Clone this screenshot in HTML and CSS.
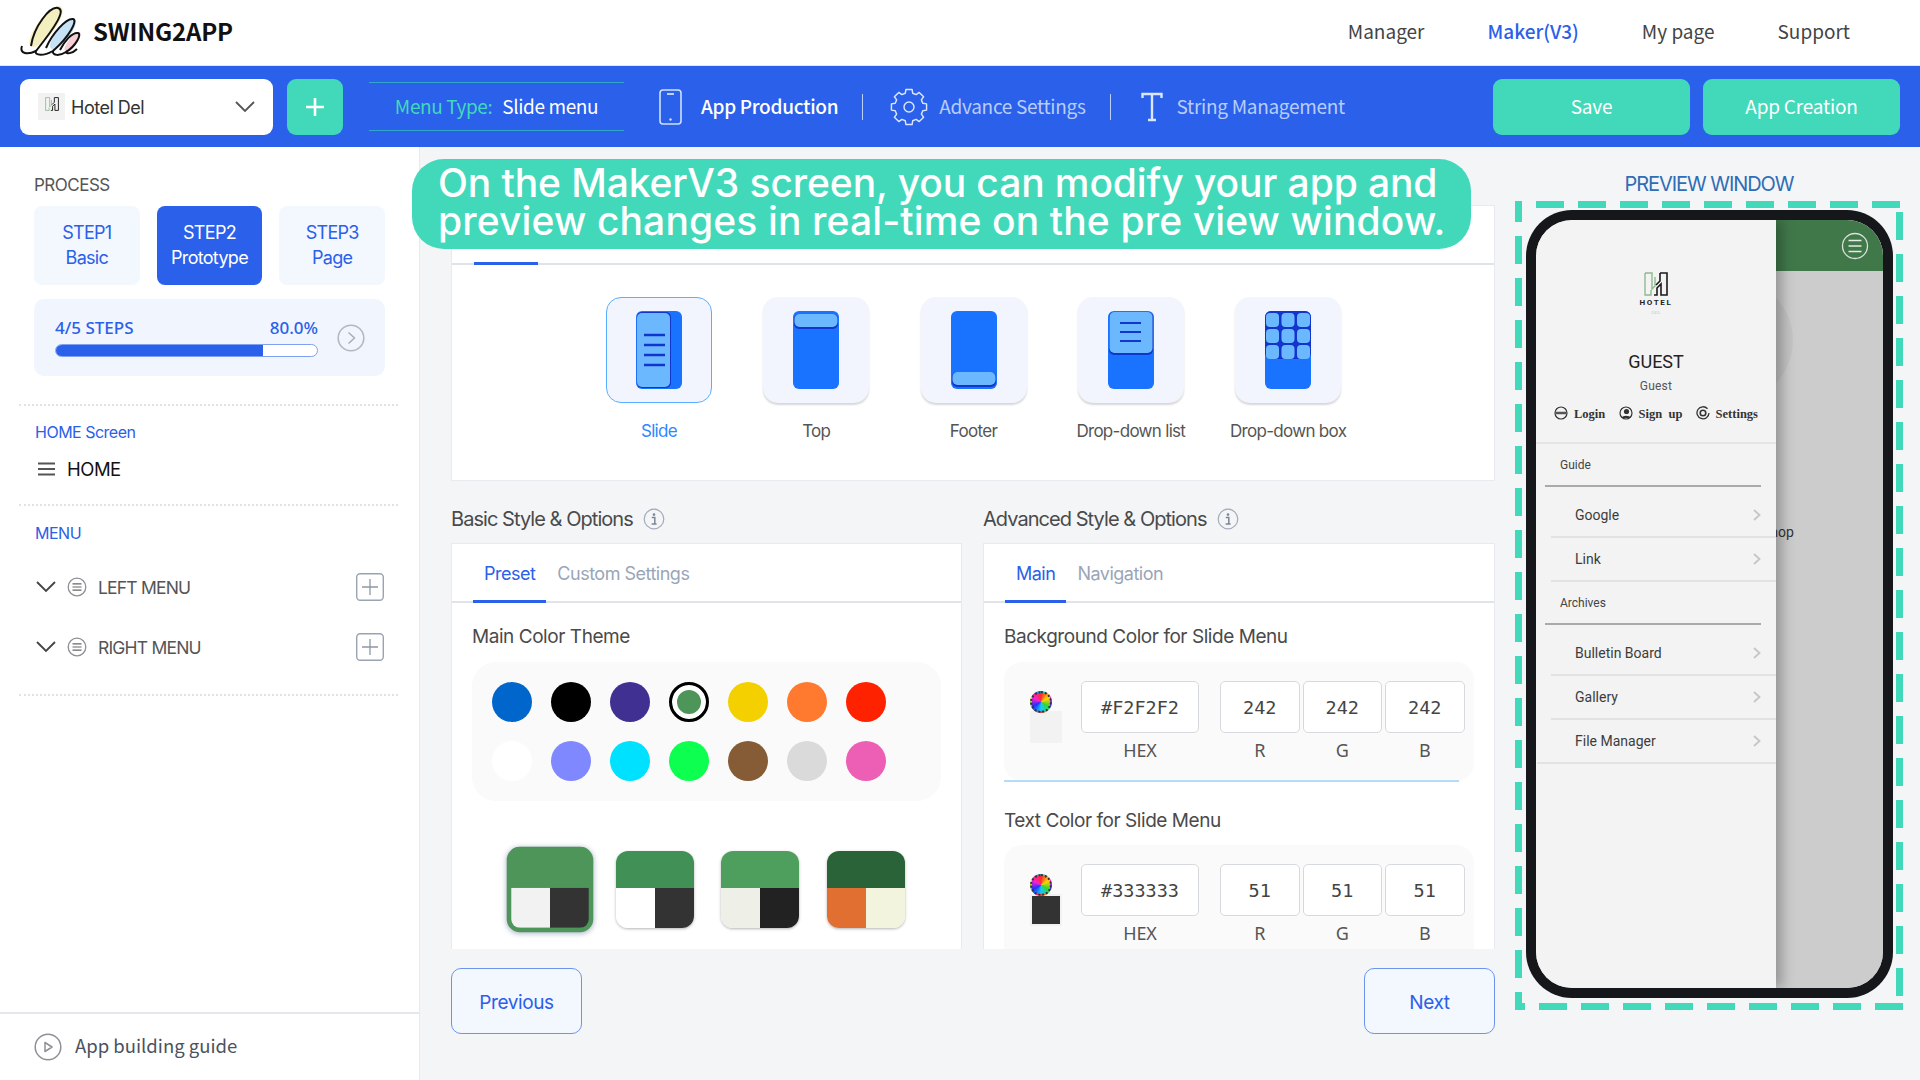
FILE: index.html
```html
<!DOCTYPE html>
<html lang="en">
<head>
<meta charset="utf-8">
<title>Swing2App Maker</title>
<link rel="stylesheet" href="styles.css">
</head>
<body>
<svg class="defs" width="0" height="0" aria-hidden="true">
  <symbol id="hotel" viewBox="0 0 24 24">
    <path d="M1 1h7v16l3-3V5" fill="none" stroke="#8fb98f" stroke-width="1.4"/>
    <path d="M1 1v22h6v-5" fill="none" stroke="#8fb98f" stroke-width="1.4"/>
    <path d="M16 1h7v22h-6V12l-4 4v7h-3" fill="none" stroke="#1a1a1a" stroke-width="1.6"/>
    <path d="M16 1v8l-4 4" fill="none" stroke="#1a1a1a" stroke-width="1.6"/>
  </symbol>
  <symbol id="chev" viewBox="0 0 20 12">
    <path d="M1 1l9 9 9-9" fill="none" stroke="currentColor" stroke-width="1.8"/>
  </symbol>
  <symbol id="list" viewBox="0 0 20 20">
    <circle cx="10" cy="10" r="8.8" fill="none" stroke="#8b8f96" stroke-width="1.3"/>
    <path d="M5.5 6.8h9M5.5 10h9M5.5 13.2h9" stroke="#666" stroke-width="1.2"/>
  </symbol>
  <symbol id="plusbox" viewBox="0 0 28 28">
    <rect x=".7" y=".7" width="26.6" height="26.6" rx="3.500" fill="none" stroke="#9aa3b2" stroke-width="1.4"/>
    <path d="M14 6v16M6 14h16" stroke="#8f98a8" stroke-width="1.3"/>
  </symbol>
  <symbol id="info" viewBox="0 0 22 22">
    <circle cx="11" cy="11" r="9.8" fill="none" stroke="#a3abb9" stroke-width="1.2"/>
    <circle cx="11" cy="6.6" r="1.3" fill="#7c8698"/>
    <path d="M8.8 9.6h3v6.2M8.6 16h5" fill="none" stroke="#7c8698" stroke-width="1.5"/>
  </symbol>
  <symbol id="gt" viewBox="0 0 8 12">
    <path d="M1 1l5.5 5L1 11" fill="none" stroke="#c6c6c6" stroke-width="1.8"/>
  </symbol>
</svg>

<header class="topbar">
  <div class="brand">
    <svg class="brand-mark" width="64" height="56" viewBox="0 0 64 56">
      <ellipse cx="26" cy="22.500" rx="8.500" ry="25" transform="rotate(37.500 26 22.500)" fill="#f3efbf"/>
      <ellipse cx="43" cy="30" rx="6.500" ry="19" transform="rotate(38.700 43 30)" fill="#c5e2f6"/>
      <ellipse cx="52.500" cy="37.500" rx="3.800" ry="12" transform="rotate(38 52.500 37.500)" fill="#f7cdd6"/>
      <path d="M11 42C14 22 30 2 38 4C46 6 36 22 16 47" fill="none" stroke="#111" stroke-width="2"/>
      <path d="M26 44C32 30 46 14 53 15C58 16 50 32 33 47" fill="none" stroke="#111" stroke-width="2"/>
      <path d="M40 46C44 38 52 28 58 29C62 30 56 42 46 48" fill="none" stroke="#111" stroke-width="2"/>
      <path d="M2 42C-1 50 8 51 16 47C14 52 24 52 33 47C32 52 40 52 46 48C46 50 52 50 57 45" fill="none" stroke="#111" stroke-width="2"/>
    </svg>
    <span class="brand-name">SWING2APP</span>
  </div>
  <nav class="topnav">
    <a class="topnav-link">Manager</a>
    <a class="topnav-link is-active">Maker(V3)</a>
    <a class="topnav-link">My page</a>
    <a class="topnav-link">Support</a>
  </nav>
</header>

<section class="toolbar">
  <div class="app-select">
    <span class="app-thumb"><svg width="14" height="14"><use href="#hotel"/></svg></span>
    <span class="app-name">Hotel Del</span>
    <svg class="app-caret" width="20" height="12"><use href="#chev"/></svg>
  </div>
  <button class="add-btn">
    <svg width="20" height="20" viewBox="0 0 20 20"><path d="M10 1v18M1 10h18" stroke="#fff" stroke-width="2.6"/></svg>
  </button>
  <div class="menu-type"><span class="menu-type-key">Menu Type:</span><span class="menu-type-val">Slide menu</span></div>
  <div class="tool-tab is-on tool-first">
    <svg width="23" height="36" viewBox="0 0 23 36"><rect x="1" y="1" width="21" height="34" rx="3" fill="none" stroke="#cfe0ff" stroke-width="1.6"/><path d="M8 5h7" stroke="#cfe0ff" stroke-width="1.8"/><circle cx="11.5" cy="30.5" r="1.2" fill="#cfe0ff"/></svg>
    <span>App Production</span>
  </div>
  <i class="tool-sep"></i>
  <div class="tool-tab tool-gear">
    <svg width="38" height="38" viewBox="0 0 32 32"><path d="M19.1 4.4L18.6 1.2H13.4L12.9 4.4L10 5.6L7.4 3.7L3.7 7.4L5.6 10L4.4 12.9L1.2 13.4V18.6L4.4 19.1L5.6 22L3.7 24.6L7.4 28.3L10 26.4L12.9 27.6L13.4 30.8H18.6L19.1 27.6L22 26.4L24.6 28.3L28.3 24.6L26.4 22L27.6 19.1L30.8 18.6V13.4L27.6 12.9L26.4 10L28.3 7.4L24.6 3.7L22 5.6Z" fill="none" stroke="#dbe6ff" stroke-width="1.2" stroke-linejoin="round"/><circle cx="16" cy="16" r="4.2" fill="none" stroke="#dbe6ff" stroke-width="1.2"/></svg>
    <span>Advance Settings</span>
  </div>
  <i class="tool-sep"></i>
  <div class="tool-tab tool-t">
    <svg width="22" height="30" viewBox="0 0 22 30"><path d="M1.5 6V2h19v4M11 2v26M7 28h8" fill="none" stroke="#dbe6ff" stroke-width="2.4"/></svg>
    <span>String Management</span>
  </div>
  <button class="cta cta-save">Save</button>
  <button class="cta">App Creation</button>
</section>

<div class="workspace">
  <aside class="sidebar">
    <div class="side-title">PROCESS</div>
    <div class="steps">
      <div class="step">STEP1<br>Basic</div>
      <div class="step is-on">STEP2<br>Prototype</div>
      <div class="step">STEP3<br>Page</div>
    </div>
    <div class="progress">
      <div class="progress-main">
        <div class="progress-text"><span>4/5 STEPS</span><span>80.0%</span></div>
        <div class="progress-bar"><div class="progress-fill" style="width:79.5%"></div></div>
      </div>
      <svg width="28" height="28" viewBox="0 0 28 28"><circle cx="14" cy="14" r="12.8" fill="none" stroke="#b4b8bf" stroke-width="1.6"/><path d="M11.5 8.5l6 5.5-6 5.5" fill="none" stroke="#a8acb3" stroke-width="1.4"/></svg>
    </div>
    <div class="dots"></div>
    <div class="side-label">HOME Screen</div>
    <div class="home-row">
      <svg width="17" height="14" viewBox="0 0 17 14"><path d="M0 1.5h17M0 7h17M0 12.5h17" stroke="#555" stroke-width="1.8"/></svg>
      <span>HOME</span>
    </div>
    <div class="dots dots-home"></div>
    <div class="side-label side-label-menu">MENU</div>
    <div class="menu-row menu-left">
      <svg class="menu-chev" width="20" height="12"><use href="#chev"/></svg>
      <svg width="20" height="20"><use href="#list"/></svg>
      <span class="menu-name">LEFT MENU</span>
      <svg width="28" height="28"><use href="#plusbox"/></svg>
    </div>
    <div class="menu-row menu-right">
      <svg class="menu-chev" width="20" height="12"><use href="#chev"/></svg>
      <svg width="20" height="20"><use href="#list"/></svg>
      <span class="menu-name">RIGHT MENU</span>
      <svg width="28" height="28"><use href="#plusbox"/></svg>
    </div>
    <div class="dots dots-menu"></div>
    <div class="side-foot">
      <svg width="28" height="28" viewBox="0 0 28 28"><circle cx="14" cy="14" r="12.8" fill="none" stroke="#8c9097" stroke-width="1.5"/><path d="M11 9.5l7 4.5-7 4.5z" fill="none" stroke="#8c9097" stroke-width="1.5" stroke-linejoin="round"/></svg>
      <span>App building guide</span>
    </div>
  </aside>

  <main class="main">
    <div class="bubble"><span class="bubble-a">On the MakerV3 screen, you can modify your app and</span><span class="bubble-b">preview changes in real-time on the pre view window.</span></div>

    <section class="type-card">
      <div class="type-tabs"><i class="type-tab-mark"></i></div>
      <div class="type-list">
        <div class="type-item is-on">
          <div class="type-box">
            <svg width="46" height="78" viewBox="0 0 46 78"><rect width="46" height="78" rx="6" fill="#1a73ff"/><rect x="1" y="1" width="34" height="76" rx="5" fill="#1236cc"/><rect x="1" y="2" width="33" height="74" rx="5" fill="#6cb8ff"/><path d="M8 24h21M8 34h21M8 44h21M8 54h21" stroke="#1236cc" stroke-width="2.4"/></svg>
          </div>
          <span>Slide</span>
        </div>
        <div class="type-item">
          <div class="type-box">
            <svg width="46" height="78" viewBox="0 0 46 78"><rect width="46" height="78" rx="6" fill="#1a73ff"/><rect x="1" y="3" width="44" height="15" rx="5" fill="#1236cc"/><rect x="1.5" y="3" width="43" height="13" rx="5" fill="#6cb8ff"/></svg>
          </div>
          <span>Top</span>
        </div>
        <div class="type-item">
          <div class="type-box">
            <svg width="46" height="78" viewBox="0 0 46 78"><rect width="46" height="78" rx="6" fill="#1a73ff"/><rect x="1" y="61" width="44" height="15" rx="5" fill="#1236cc"/><rect x="1.5" y="61" width="43" height="13" rx="5" fill="#6cb8ff"/></svg>
          </div>
          <span>Footer</span>
        </div>
        <div class="type-item">
          <div class="type-box">
            <svg width="46" height="78" viewBox="0 0 46 78"><rect width="46" height="78" rx="6" fill="#1a73ff"/><rect x="1" y="1" width="44" height="43" rx="5" fill="#1236cc"/><rect x="1.5" y="1" width="43" height="41" rx="5" fill="#6cb8ff"/><path d="M12 12h21M12 21h21M12 30h21" stroke="#1236cc" stroke-width="2.2"/></svg>
          </div>
          <span>Drop-down list</span>
        </div>
        <div class="type-item">
          <div class="type-box">
            <svg class="type-grid-svg" width="46" height="78" viewBox="0 0 46 78"><rect width="46" height="78" rx="6" fill="#1a73ff"/><rect x="0" y="0" width="46" height="48" rx="6" fill="#1236cc"/><g fill="#6cb8ff"><rect x="1" y="2" width="13" height="14" rx="4"/><rect x="16.500" y="2" width="13" height="14" rx="4"/><rect x="32" y="2" width="13" height="14" rx="4"/><rect x="1" y="18" width="13" height="14" rx="4"/><rect x="16.500" y="18" width="13" height="14" rx="4"/><rect x="32" y="18" width="13" height="14" rx="4"/><rect x="1" y="34" width="13" height="14" rx="4"/><rect x="16.500" y="34" width="13" height="14" rx="4"/><rect x="32" y="34" width="13" height="14" rx="4"/></g></svg>
          </div>
          <span>Drop-down box</span>
        </div>
      </div>
    </section>

    <div class="options">
      <section class="option-col">
        <h2 class="option-head">Basic Style &amp; Options <svg width="22" height="22"><use href="#info"/></svg></h2>
        <div class="panel">
          <div class="tabs"><span class="tab is-on">Preset</span><span class="tab">Custom Settings</span></div>
          <div class="panel-body">
            <div class="field-title">Main Color Theme</div>
            <div class="swatches">
              <i class="dot c1"></i><i class="dot c2"></i><i class="dot c3"></i><i class="dot dot-sel"></i><i class="dot c5"></i><i class="dot c6"></i><i class="dot c7"></i>
              <i class="dot c8"></i><i class="dot c9"></i><i class="dot c10"></i><i class="dot c11"></i><i class="dot c12"></i><i class="dot c13"></i><i class="dot c14"></i>
            </div>
            <div class="themes">
              <div class="theme theme-sel"><b class="t-top"></b><div class="t-bot"><i class="t-f2"></i><i class="t-33"></i></div></div>
              <div class="theme theme-2"><b class="t-top"></b><div class="t-bot"><i class="t-ff"></i><i class="t-33"></i></div></div>
              <div class="theme theme-3"><b class="t-top"></b><div class="t-bot"><i class="t-ee"></i><i class="t-22"></i></div></div>
              <div class="theme theme-4"><b class="t-top"></b><div class="t-bot"><i class="t-or"></i><i class="t-cr"></i></div></div>
            </div>
          </div>
        </div>
      </section>

      <section class="option-col">
        <h2 class="option-head">Advanced Style &amp; Options <svg width="22" height="22"><use href="#info"/></svg></h2>
        <div class="panel">
          <div class="tabs"><span class="tab is-on">Main</span><span class="tab">Navigation</span></div>
          <div class="panel-body">
            <div class="field-title">Background Color for Slide Menu</div>
            <div class="color-row">
              <div class="picker"><i class="wheel"></i><i class="chip chip-light"></i></div>
              <div class="cfield"><div class="cinput">#F2F2F2</div><label>HEX</label></div>
              <div class="cfield cfield-r"><div class="cinput">242</div><label>R</label></div>
              <div class="cfield"><div class="cinput">242</div><label>G</label></div>
              <div class="cfield"><div class="cinput">242</div><label>B</label></div>
            </div>
            <div class="color-rule"></div>
            <div class="field-title field-title-2">Text Color for Slide Menu</div>
            <div class="color-row">
              <div class="picker"><i class="wheel"></i><i class="chip chip-dark"></i></div>
              <div class="cfield"><div class="cinput">#333333</div><label>HEX</label></div>
              <div class="cfield cfield-r"><div class="cinput">51</div><label>R</label></div>
              <div class="cfield"><div class="cinput">51</div><label>G</label></div>
              <div class="cfield"><div class="cinput">51</div><label>B</label></div>
            </div>
          </div>
        </div>
      </section>
    </div>

    <div class="pager"><button class="pager-btn">Previous</button><button class="pager-btn">Next</button></div>
  </main>

  <aside class="preview">
    <svg class="dash" width="388" height="809" viewBox="1515 201 388 809">
      <g stroke="#42d9bb" stroke-width="7" fill="none" stroke-dasharray="28 14">
        <path d="M1518.500 201V1010" stroke-dashoffset="7"/>
        <path d="M1536 204.500H1903"/>
        <path d="M1899.500 212V996"/>
        <path d="M1539 1006.500H1903"/>
      </g>
      <path d="M1515 1006.500H1525" stroke="#42d9bb" stroke-width="7"/>
    </svg>
    <div class="preview-title">PREVIEW WINDOW</div>
    <div class="phone">
      <div class="screen">
        <div class="drawer">
          <svg class="drawer-logo" width="24" height="24"><use href="#hotel"/></svg>
          <div class="logo-name">HOTEL</div>
          <div class="logo-sub">DEL</div>
          <div class="guest-big">GUEST</div>
          <div class="guest-small">Guest</div>
          <div class="acct">
            <span class="acct-item"><svg width="14" height="14" viewBox="0 0 14 14"><circle cx="7" cy="7" r="6" fill="none" stroke="#333" stroke-width="1.2"/><path d="M1.500 7h11" stroke="#555" stroke-width="2.4"/></svg>Login</span>
            <span class="acct-item"><svg width="14" height="14" viewBox="0 0 14 14"><circle cx="7" cy="7" r="6" fill="none" stroke="#333" stroke-width="1.2"/><circle cx="7.500" cy="5.500" r="2.600" fill="#333"/><path d="M2.500 12c1-3 8-3 9.500 0z" fill="#333"/></svg>Sign&nbsp; up</span>
            <span class="acct-item"><svg width="14" height="14" viewBox="0 0 14 14"><path d="M11.500 2.800A6 6 0 1 0 13 7" fill="none" stroke="#333" stroke-width="1.300"/><circle cx="7" cy="7" r="2.800" fill="none" stroke="#333" stroke-width="1.600"/></svg>Settings</span>
          </div>
          <div class="d-group">Guide</div>
          <div class="d-item d-first">Google<svg width="8" height="12"><use href="#gt"/></svg></div>
          <div class="d-item">Link<svg width="8" height="12"><use href="#gt"/></svg></div>
          <div class="d-group">Archives</div>
          <div class="d-item d-first">Bulletin Board<svg width="8" height="12"><use href="#gt"/></svg></div>
          <div class="d-item">Gallery<svg width="8" height="12"><use href="#gt"/></svg></div>
          <div class="d-item d-last">File Manager<svg width="8" height="12"><use href="#gt"/></svg></div>
        </div>
        <div class="backdrop">
          <div class="app-head">
            <svg width="28" height="28" viewBox="0 0 28 28"><circle cx="14" cy="14" r="12.500" fill="none" stroke="#d9e3da" stroke-width="1.300"/><path d="M7.500 8.500h13M7.500 14h13M7.500 19.500h13" stroke="#e4ebe5" stroke-width="1.500"/></svg>
          </div>
          <i class="ghost-circle"></i>
          <span class="ghost-text">Shop</span>
        </div>
      </div>
    </div>
  </aside>
</div>
</body>
</html>
```

FILE: styles.css
```css
* { box-sizing: border-box; }
html, body { margin: 0; padding: 0; }
body {
  width: 1920px;
  height: 1080px;
  overflow: hidden;
  background: #f4f5f7;
  font-family: "Inter", "Noto Sans", sans-serif;
  color: #444;
}
.defs { position: absolute; }
button { font: inherit; border: 0; cursor: pointer; }
h2 { margin: 0; font-weight: 400; }

/* top bar */
.topbar {
  height: 66px;
  background: #fff;
  border-bottom: 1px solid #e6e6e6;
  display: flex;
  align-items: center;
  padding-left: 20px;
}
.brand { display: flex; align-items: center; gap: 9px; }
.brand-mark { display: block; margin-top: -2px; }
.brand-name {
  font-family: "Noto Sans CJK KR", "Noto Sans", sans-serif;
  font-weight: 700;
  font-size: 24px;
  color: #111;
  letter-spacing: -.2px;
  padding-bottom: 4px;
}
.topnav {
  margin-left: auto;
  display: flex;
  gap: 63px;
  padding: 0 70px 4px 0;
  font-family: "Noto Sans CJK KR", "Noto Sans", sans-serif;
  font-size: 19px;
  color: #444;
}
.topnav-link.is-active { color: #2a60ea; font-weight: 500; }

/* tool bar */
.toolbar {
  height: 81px;
  background: #2a60ea;
  display: flex;
  align-items: center;
  padding: 0 20px;
  font-family: "Noto Sans CJK KR", "Noto Sans", sans-serif;
  font-size: 19px;
  color: #fff;
}
.toolbar span { padding-bottom: 3px; }
.app-select {
  width: 253px;
  height: 56px;
  background: #fff;
  border-radius: 9px;
  display: flex;
  align-items: center;
  padding: 0 18px 0 18px;
  color: #333;
  font-family: "Inter", sans-serif;
  font-size: 18px;
  letter-spacing: -.5px;
}
.toolbar .app-thumb {
  width: 27px;
  height: 27px;
  background: #f2f2f2;
  display: flex;
  align-items: center;
  justify-content: center;
  padding: 0;
}
.app-thumb svg { margin-top: -6px; }
.toolbar .app-name { margin-left: 6px; padding: 2px 0 0; }
.app-caret { margin-left: auto; color: #555; }
.add-btn {
  width: 56px;
  height: 56px;
  margin-left: 14px;
  background: #42d9bb;
  border-radius: 9px;
  display: flex;
  align-items: center;
  justify-content: center;
}
.menu-type {
  width: 255px;
  height: 49px;
  margin-left: 26px;
  border-top: 1.5px solid #31a9c6;
  border-bottom: 1.5px solid #31a9c6;
  display: flex;
  align-items: center;
  justify-content: center;
  gap: 10px;
}
.menu-type-key { color: #42d9bb; font-weight: 400; letter-spacing: -.4px; }
.menu-type-val { letter-spacing: -.4px; }
.tool-tab { display: flex; align-items: center; color: #b8cdfb; font-weight: 400; letter-spacing: -.3px; }
.tool-tab.is-on { color: #fff; font-weight: 500; }
.tool-first { margin-left: 35px; gap: 19px; }
.tool-gear { gap: 11px; }
.tool-t { gap: 14px; margin-left: -1px; }
.tool-sep { width: 1px; height: 26px; background: #bcd0fb; margin: 0 24px 0 24px; }
.tool-sep + .tool-gear { margin-left: 3px; }
.tool-sep + .tool-t { margin-left: 6px; }
.cta {
  width: 197px;
  height: 56px;
  padding-bottom: 3px;
  background: #42d9bb;
  color: #fff;
  border-radius: 9px;
  margin-left: 13px;
  font-size: 19px;
  font-weight: 400;
  letter-spacing: -.2px;
}
.cta-save { margin-left: auto; }

/* layout */
.workspace { position: relative; display: flex; height: 933px; }

/* sidebar */
.sidebar {
  width: 420px;
  flex: none;
  background: #fff;
  border-right: 1px solid #e8eaef;
  display: flex;
  flex-direction: column;
  font-size: 17px;
  letter-spacing: -.5px;
}
.side-title {
  margin: 26px 0 0 34px;
  height: 24px;
  line-height: 24px;
  font-size: 17px;
  color: #555;
}
.steps { display: flex; gap: 17px; margin: 9px 0 0 34px; width: 351px; }
.step {
  flex: 1;
  height: 79px;
  padding-top: 15px;
  background: #f3f7fe;
  border-radius: 8px;
  text-align: center;
  font-size: 18px;
  letter-spacing: -.7px;
  line-height: 24.500px;
  color: #2a60ea;
}
.step.is-on { background: #2a60ea; color: #fff; }
.progress {
  width: 351px;
  height: 77px;
  margin: 14px 0 0 34px;
  padding: 0 20px 0 21px;
  background: #f1f5fe;
  border-radius: 10px;
  display: flex;
  align-items: center;
  justify-content: space-between;
}
.progress-main { width: 263px; margin-top: -2px; }
.progress-text {
  display: flex;
  justify-content: space-between;
  font-family: "Noto Sans", sans-serif;
  font-size: 17px;
  font-weight: 500;
  line-height: 22px;
  letter-spacing: 0;
  color: #2a60ea;
}
.progress-bar {
  height: 13px;
  margin-top: 5px;
  background: #fff;
  border: 1px solid #7fa0f2;
  border-radius: 7px;
  overflow: hidden;
}
.progress-fill { height: 100%; background: #2a60ea; }
.dots { margin: 28px 21px 0 19px; border-top: 2px dotted #e0e2e6; height: 2px; flex: none; }
.side-label {
  margin: 16px 0 0 35px;
  height: 20px;
  line-height: 20px;
  font-size: 16px;
  color: #2a60ea;
}
.side-label-menu { margin-top: 17px; }
.home-row {
  display: flex;
  align-items: center;
  gap: 12px;
  height: 32px;
  margin: 11px 0 0 38px;
  font-size: 18.500px;
  color: #111;
}
.dots-home { margin-top: 19px; }
.menu-row {
  display: flex;
  align-items: center;
  height: 40px;
  padding: 0 35px 0 36px;
  color: #555;
  font-size: 17.500px;
  letter-spacing: -.8px;
}
.menu-left { margin-top: 24px; }
.menu-right { margin-top: 20px; }
.menu-chev { margin-right: 11px; color: #444; }
.menu-name { margin: 0 auto 0 11px; }
.dots-menu { margin-top: 27px; }
.side-foot {
  margin-top: auto;
  height: 68px;
  border-top: 2px solid #e4e7ec;
  padding-left: 34px;
  display: flex;
  align-items: center;
  gap: 13px;
  font-family: "Noto Sans CJK KR", "Noto Sans", sans-serif;
  font-size: 18.500px;
  letter-spacing: 0;
  color: #4a5260;
}
.side-foot span { padding-bottom: 4px; }

/* main */
.main { width: 1075px; flex: none; padding: 58px 0 0 31px; }
.bubble {
  position: absolute;
  left: 412px;
  top: 12px;
  width: 1059px;
  height: 90px;
  padding: 5px 0 0 26px;
  background: #42d9bb;
  border-radius: 32px;
  color: #fff;
  font-family: "Inter", sans-serif;
  font-weight: 500;
  font-size: 39px;
  line-height: 38px;
  white-space: nowrap;
  z-index: 2;
}
.bubble-a { display: block; letter-spacing: -.1px; }
.bubble-b { display: block; letter-spacing: .13px; }
.type-card {
  width: 1044px;
  height: 276px;
  background: #fff;
  border: 1px solid #e8eaef;
}
.type-tabs { position: relative; height: 59px; border-bottom: 2px solid #dfe3ea; }
.type-tab-mark { position: absolute; left: 22px; bottom: -2px; width: 64px; height: 3px; background: #2a60ea; }
.type-list { display: flex; justify-content: center; gap: 51.300px; padding: 32px 0 0 1px; }
.type-item {
  width: 106px;
  display: flex;
  flex-direction: column;
  align-items: center;
  font-size: 17px;
  letter-spacing: -.7px;
  color: #555;
  white-space: nowrap;
}
.type-box {
  width: 106px;
  height: 106px;
  background: #f2f5fd;
  border-radius: 15px;
  box-shadow: 0 2px 2px rgba(0,0,0,.16);
  display: flex;
  align-items: center;
  justify-content: center;
  margin-bottom: 18px;
}
.type-item.is-on { color: #2e88ff; }
.type-item.is-on .type-box { box-shadow: none; border: 1px solid #5aaeff; }

.options { display: grid; grid-template-columns: 511px 512px; gap: 21px; margin-top: 18px; }
.option-head {
  height: 40px;
  margin-bottom: 4px;
  display: flex;
  align-items: center;
  gap: 10px;
  font-size: 20px;
  letter-spacing: -.95px;
  color: #4a4a4a;
}
.panel {
  height: 406px;
  background: #fff;
  border: 1px solid #e8eaef;
  border-bottom: 0;
  overflow: hidden;
}
.tabs {
  height: 59px;
  padding-left: 21px;
  display: flex;
  border-bottom: 2px solid #dfe3ea;
  font-size: 18px;
  letter-spacing: -.5px;
  color: #9aa5b8;
}
.tab { padding: 0 11px; line-height: 60px; height: 59px; }
.tab.is-on { color: #2a60ea; border-bottom: 3px solid #2a60ea; }
.panel-body { padding: 22px 0 0 20px; }
.field-title { height: 24px; line-height: 24px; font-size: 19px; letter-spacing: -.45px; color: #4a4a4a; }
.swatches {
  width: 469px;
  height: 139px;
  margin-top: 13px;
  padding: 20px 20px;
  background: #fafafa;
  border-radius: 24px;
  display: grid;
  grid-template-columns: repeat(7, 40px);
  gap: 19px;
}
.dot { width: 40px; height: 40px; border-radius: 50%; display: block; }
.c1 { background: #0066cc; }
.c2 { background: #000; }
.c3 { background: #3f3092; }
.dot-sel { border: 3px solid #000; background: #4e9559; box-shadow: inset 0 0 0 5px #fff; }
.c5 { background: #f5d000; }
.c6 { background: #ff7a2f; }
.c7 { background: #ff2200; }
.c8 { background: #fff; }
.c9 { background: #8088ff; }
.c10 { background: #00e1ff; }
.c11 { background: #0dff4f; }
.c12 { background: #855c35; }
.c13 { background: #dadada; }
.c14 { background: #ec5fb5; }
.themes { display: flex; gap: 27.200px; margin: 50px 0 0 39px; }
.theme {
  width: 78px;
  height: 77px;
  border-radius: 12px;
  overflow: hidden;
  display: flex;
  flex-direction: column;
  box-shadow: 0 1px 3px rgba(0,0,0,.3);
}
.t-top { height: 37px; display: block; }
.t-bot { flex: 1; display: flex; overflow: hidden; }
.t-bot i { flex: 1; display: block; }
.theme-sel {
  transform: scale(1.11);
  background: #4e9559;
  padding: 0 4px 4px;
  box-shadow: 0 1px 5px rgba(50,70,120,.35);
}
.theme-sel .t-top { background: #4e9559; }
.theme-sel .t-bot { border-radius: 0 0 8px 8px; }
.theme-2 .t-top { background: #419055; }
.theme-3 .t-top { background: #4e9f5d; }
.theme-4 .t-top { background: #2a6337; }
.t-f2 { background: #f2f2f2; }
.t-33 { background: #333; }
.t-ff { background: #fff; }
.t-ee { background: #eef0e7; }
.t-22 { background: #222; }
.t-or { background: #e26f32; }
.t-cr { background: #f2f4dd; }

.color-row {
  width: 470px;
  height: 119px;
  margin-top: 13px;
  padding: 19px 0 0 26px;
  background: #fafafa;
  border-radius: 18px;
  display: flex;
  gap: 3px;
}
.picker { width: 48px; flex: none; padding-top: 10px; }
.wheel {
  display: block;
  width: 22px;
  height: 22px;
  margin: 0 0 -2px 0;
  position: relative;
  z-index: 1;
  border-radius: 50%;
  border: 2px dotted #333;
  background: conic-gradient(#ff2a2a, #ffd400, #31d636, #17c8ff, #2030ff, #ff20d0, #ff2a2a);
}
.chip { display: block; width: 32px; height: 32px; }
.chip-light { background: #f2f2f2; }
.chip-dark { background: #333; border: 2px solid #f2f2f2; }
.cfield { width: 79.500px; font-size: 18px; text-align: center; color: #555; letter-spacing: -.2px; }
.cfield:nth-child(2) { width: 118px; margin-right: 18px; }
.cinput {
  height: 52px;
  line-height: 52px;
  background: #fff;
  border: 1px solid #d6d9de;
  border-radius: 5px;
  margin-bottom: 5px;
  font-family: "DejaVu Sans Mono", monospace;
  font-size: 18.500px;
  letter-spacing: 0;
  color: #444;
}
.cfield label { display: block; line-height: 24px; font-family: "Noto Sans", sans-serif; }
.color-rule { width: 455px; height: 2px; margin-top: -1px; background: #b3dcf8; }
.field-title-2 { margin-top: 27px; }
.field-title-2 + .color-row { margin-top: 12px; }

.pager { display: flex; justify-content: space-between; width: 1044px; margin-top: 19px; }
.pager-btn {
  width: 131px;
  height: 66px;
  padding-top: 3px;
  background: #f3f7fe;
  border: 1.500px solid #6c94ee;
  border-radius: 10px;
  color: #2a60ea;
  font-size: 19px;
  letter-spacing: -.4px;
}

/* preview */
.preview { position: relative; margin-left: 20px; width: 388px; flex: none; padding-top: 25px; }
.dash { position: absolute; left: 0; top: 54px; display: block; }
.preview-title {
  height: 24px;
  line-height: 24px;
  text-align: center;
  font-size: 20px;
  letter-spacing: -1.050px;
  color: #2f6db5;
}
.phone {
  position: relative;
  width: 367px;
  height: 788px;
  margin: 14px 0 0 11px;
  background: #15171b;
  border-radius: 46px;
  padding: 10px;
}
.screen {
  display: flex;
  width: 347px;
  height: 768px;
  border-radius: 36px;
  overflow: hidden;
  background: #ccc;
  font-family: "Roboto", sans-serif;
}
.drawer {
  position: relative;
  z-index: 1;
  width: 240px;
  flex: none;
  background: #f3f3f3;
  box-shadow: 6px 0 12px rgba(0,0,0,.28);
  padding-top: 52px;
  color: #444;
  text-align: center;
}
.drawer-logo { display: block; margin: 0 auto; }
.logo-name { line-height: 13px; font-size: 8px; font-weight: 700; letter-spacing: 1.700px; color: #222; }
.logo-sub { line-height: 7px; font-size: 5px; font-family: "Liberation Serif", serif; color: #ccc; }
.guest-big { margin-top: 34px; line-height: 24px; font-size: 18px; color: #222; }
.guest-small { margin-top: 4px; line-height: 16px; font-size: 12px; letter-spacing: .2px; color: #555; }
.acct {
  display: flex;
  justify-content: space-between;
  height: 40px;
  margin-top: 10px;
  padding: 0 18px 0 18px;
  border-bottom: 2px solid #e4e4e4;
  font-family: "Liberation Serif", serif;
  font-weight: 700;
  font-size: 12.500px;
  color: #333;
}
.acct-item { display: flex; align-items: flex-start; gap: 6px; line-height: 20px; }
.acct-item svg { margin-top: 2px; }
.d-group {
  height: 43px;
  margin: 0 15px 0 9px;
  padding: 12px 0 0 15px;
  border-bottom: 2px solid #aaa;
  text-align: left;
  font-size: 12px;
  line-height: 18px;
  color: #444;
}
.d-item {
  display: flex;
  align-items: center;
  justify-content: space-between;
  height: 44px;
  margin-left: 15px;
  padding: 0 15px 0 24px;
  border-bottom: 2px solid #e2e2e2;
  font-size: 14px;
  color: #3c3c3c;
}
.d-first { margin-top: 7px; }
.d-last { margin-left: 1px; padding-left: 38px; }
.backdrop { position: relative; flex: 1; background: #ccc; }
.app-head {
  height: 51px;
  background: #41784a;
  display: flex;
  align-items: center;
  justify-content: flex-end;
  padding-right: 14px;
}
.ghost-circle {
  position: absolute;
  left: -108px;
  top: 58px;
  width: 125px;
  height: 125px;
  border-radius: 50%;
  background: rgba(0,0,0,.035);
}
.ghost-text {
  position: absolute;
  left: -14px;
  top: 304px;
  font-size: 14px;
  color: #333;
}
```
